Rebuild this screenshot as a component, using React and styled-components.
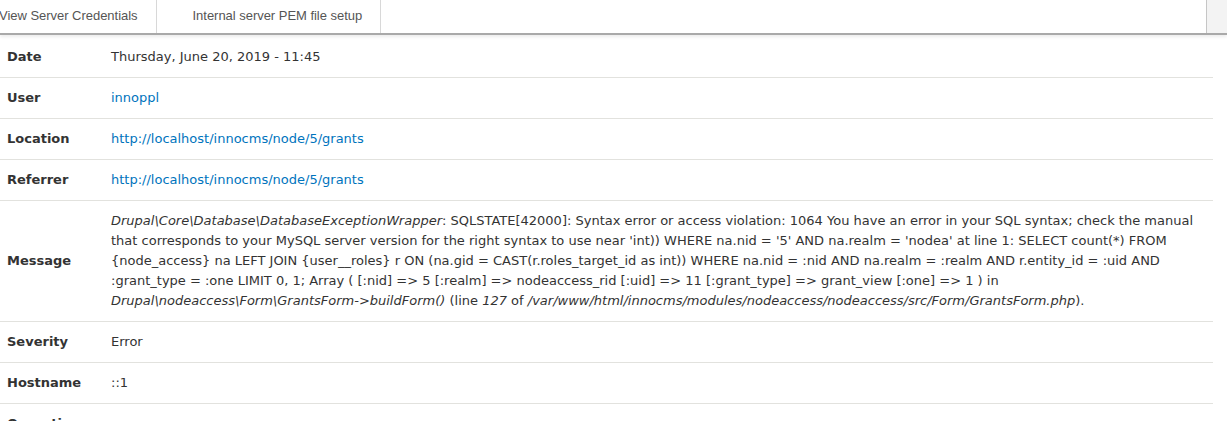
import React from "react";
import styled, { createGlobalStyle } from "styled-components";

const GlobalStyle = createGlobalStyle`
  body {
    margin: 0;
    background: #fff;
    font-family: "DejaVu Sans", sans-serif;
    overflow: hidden;
  }
`;

const TopBar = styled.div`
  display: flex;
  height: 33px;
  border-bottom: 2px solid #a9a9a9;
  box-shadow: 0 2px 3px rgba(0, 0, 0, 0.08);
  position: relative;
  z-index: 1;
`;

const Tabs = styled.div`
  flex: 1;
  display: flex;
  background: #fff;
  border-right: 1px solid #c6c6c6;
  overflow: hidden;
`;

const Tab = styled.div`
  display: flex;
  align-items: center;
  padding: 0 18px 3px 36px;
  margin-left: ${(props) => (props.first ? "-37px" : "0")};
  border-right: 1px solid #d8d8d8;
  font-family: "Liberation Sans", Arial, sans-serif;
  font-size: 13px;
  letter-spacing: -0.03px;
  color: #555;
  white-space: nowrap;
  cursor: pointer;
`;

const Gutter = styled.div`
  width: 20px;
  background: #f3f3f3;
`;

const Table = styled.table`
  width: 1213px;
  border-collapse: collapse;
  margin-top: 2px;
  font-size: 13px;
  color: #333;
`;

const Row = styled.tr`
  border-bottom: 1px solid #e2e2de;
`;

const Label = styled.th`
  width: 90px;
  padding: 10px 7px;
  text-align: left;
  font-weight: bold;
  line-height: 20px;
  vertical-align: middle;
`;

const Value = styled.td`
  padding: 10px 12px 10px 7px;
  line-height: 20px;
`;

const Link = styled.a`
  color: #0074bd;
  text-decoration: none;
`;

const rows = [
  { label: "Date", value: "Thursday, June 20, 2019 - 11:45" },
  { label: "User", value: <Link href="#">innoppl</Link> },
  {
    label: "Location",
    value: <Link href="#">http://localhost/innocms/node/5/grants</Link>,
  },
  {
    label: "Referrer",
    value: <Link href="#">http://localhost/innocms/node/5/grants</Link>,
  },
  {
    label: "Message",
    value: (
      <>
        <em>Drupal\Core\Database\DatabaseExceptionWrapper</em>: SQLSTATE[42000]:
        Syntax error or access violation: 1064 You have an error in your SQL
        syntax; check the manual that corresponds to your MySQL server version
        for the right syntax to use near 'int)) WHERE na.nid = '5' AND na.realm
        = 'nodea' at line 1: SELECT count(*) FROM {"{node_access}"} na LEFT JOIN{" "}
        {"{user__roles}"} r ON (na.gid = CAST(r.roles_target_id as int)) WHERE
        na.nid = :nid AND na.realm = :realm AND r.entity_id = :uid AND
        :grant_type = :one LIMIT 0, 1; Array ( [:nid] =&gt; 5 [:realm] =&gt;
        nodeaccess_rid [:uid] =&gt; 11 [:grant_type] =&gt; grant_view [:one]
        =&gt; 1 ) in{" "}
        <em>Drupal\nodeaccess\Form\GrantsForm-&gt;buildForm()</em> (line{" "}
        <em>127</em> of{" "}
        <em>
          /var/www/html/innocms/modules/nodeaccess/nodeaccess/src/Form/GrantsForm.php
        </em>
        ).
      </>
    ),
  },
  { label: "Severity", value: "Error" },
  { label: "Hostname", value: "::1" },
  { label: "Operations", value: "" },
];

const App = () => (
  <>
    <GlobalStyle />
    <TopBar>
      <Tabs>
        <Tab first>View Server Credentials</Tab>
        <Tab>Internal server PEM file setup</Tab>
      </Tabs>
      <Gutter />
    </TopBar>
    <Table>
      <tbody>
        {rows.map((row) => (
          <Row key={row.label}>
            <Label>{row.label}</Label>
            <Value>{row.value}</Value>
          </Row>
        ))}
      </tbody>
    </Table>
  </>
);

export default App;
